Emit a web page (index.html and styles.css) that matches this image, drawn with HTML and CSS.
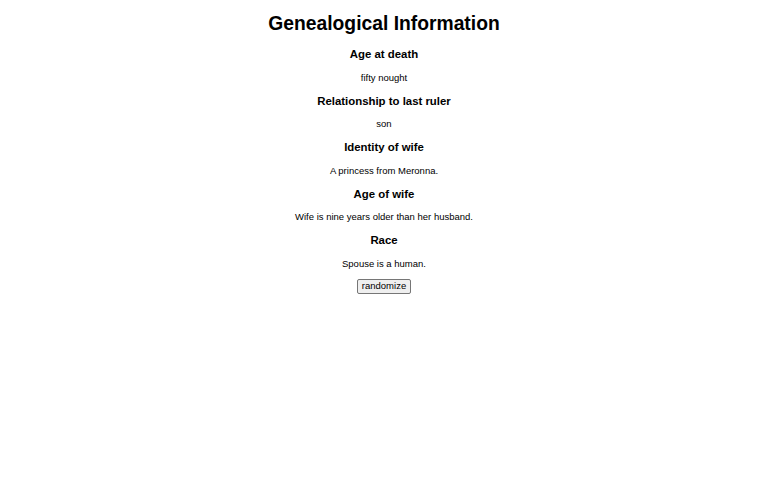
FILE: index.html
```html
<!DOCTYPE html>
<html lang="en">
<head>
<meta charset="utf-8">
<title>Genealogical Information</title>
<link rel="stylesheet" href="styles.css">
</head>
<body>
<main class="sheet">
  <h1 class="title">Genealogical Information</h1>
  <h3 class="label">Age at death</h3>
  <p class="value">fifty nought</p>
  <h3 class="label">Relationship to last ruler</h3>
  <p class="value">son</p>
  <h3 class="label">Identity of wife</h3>
  <p class="value">A princess from Meronna.</p>
  <h3 class="label">Age of wife</h3>
  <p class="value">Wife is nine years older than her husband.</p>
  <h3 class="label">Race</h3>
  <p class="value">Spouse is a human.</p>
  <button class="roll" type="button">randomize</button>
</main>
</body>
</html>
```

FILE: styles.css
```css
html, body {
  margin: 0;
  background: #ffffff;
}

body {
  font-family: "Liberation Sans", Arial, sans-serif;
  color: #000000;
}

.sheet {
  display: flex;
  flex-direction: column;
  align-items: center;
  gap: 9.25px;
  padding-top: 10px;
  text-align: center;
}

.title {
  margin: 0;
  font-size: 19.3px;
  font-weight: bold;
  line-height: 27px;
}

.label {
  margin: 0;
  font-size: 11.4px;
  font-weight: bold;
  line-height: 16px;
}

.value {
  margin: 0;
  font-size: 9.5px;
  line-height: 12px;
}

.roll {
  font-family: "Liberation Sans", Arial, sans-serif;
  font-size: 9.5px;
  line-height: 12px;
  padding: 0 4px;
  height: 15px;
  color: #000000;
  background: #efefef;
  border: 1px solid #767676;
  border-radius: 2px;
}
```
